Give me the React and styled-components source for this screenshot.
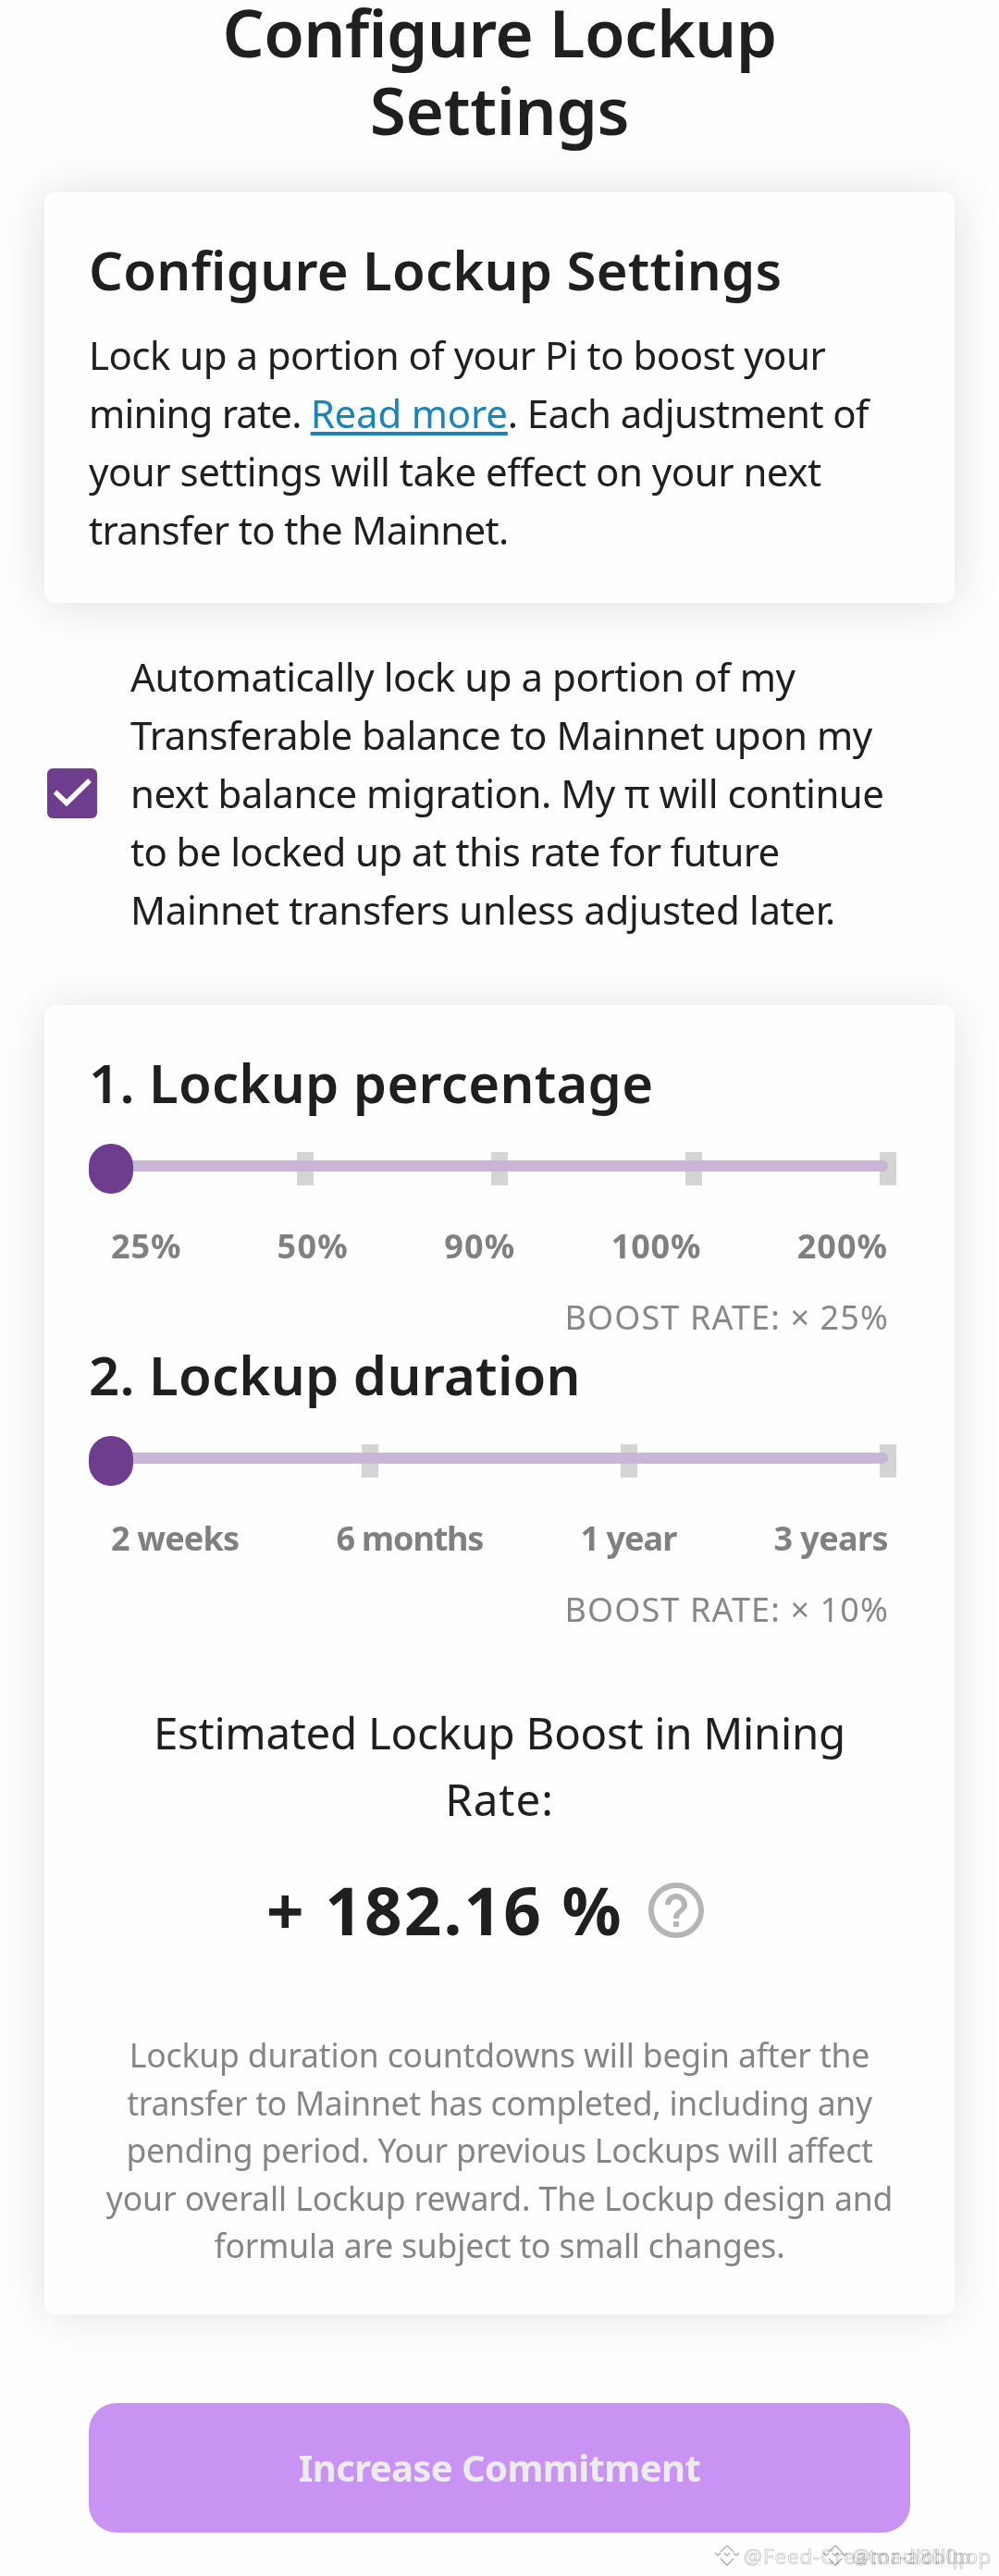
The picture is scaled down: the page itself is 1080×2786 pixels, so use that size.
import React from "react";
import styled, { createGlobalStyle } from "styled-components";

const GlobalStyle = createGlobalStyle`
  *, *::before, *::after { box-sizing: border-box; }
  body {
    margin: 0;
    background: #fefefe;
    color: #1f1f1f;
    font-family: "Noto Sans", "Open Sans", sans-serif;
  }
  h1, h2, h3, p { margin: 0; }
`;

const Page = styled.main`
  display: flex;
  flex-direction: column;
  width: 1080px;
  height: 2786px;
  padding: 0 48px;
  overflow: hidden;
`;

const Line = styled.span`
  display: block;
  white-space: nowrap;
  letter-spacing: ${(p) => p.$track || 0}px;
`;

const PageTitle = styled.h1`
  margin-top: -7px;
  font-size: 71px;
  font-weight: 600;
  line-height: 84px;
  text-align: center;
`;

const Card = styled.section`
  display: flex;
  flex-direction: column;
  margin-top: ${(p) => p.$gap}px;
  padding: 48px;
  border-radius: 12px;
  background: #fefefe;
  box-shadow: 0 2px 52px rgba(0, 0, 0, ${(p) => p.$shade || 0.11});
`;

const Heading = styled.h2`
  font-size: 58px;
  font-weight: 600;
  line-height: 71px;
`;

const Body = styled.p`
  font-size: 42px;
  line-height: 63px;
`;

const Intro = styled(Body)`
  margin-top: 25px;
`;

const Lead = styled.span`
  letter-spacing: -0.85px;
`;

const Link = styled.a`
  color: #1d84b5;
  letter-spacing: -0.2px;
  text-decoration: underline;
  text-decoration-thickness: 4px;
  text-underline-offset: 4px;
`;

const Consent = styled.label`
  display: flex;
  align-items: center;
  gap: 36px;
  margin-top: 48px;
  padding-left: 3px;
`;

const CheckBox = styled.span`
  display: flex;
  flex: none;
  width: 54px;
  height: 54px;
  border-radius: 6px;
  background: #6f3d8e;
`;

const SliderGrid = styled.div`
  display: grid;
  align-items: center;
  height: 54px;
  margin-top: 31px;

  & > * { grid-area: 1 / 1; }
`;

const Ticks = styled.div`
  display: flex;
  justify-content: space-between;
  margin: 0 15px;
`;

const Tick = styled.span`
  width: 18px;
  height: 36px;
  background: #d4d4d4;
`;

const Rail = styled.div`
  height: 12px;
  margin: 0 24px 6px;
  border-radius: 6px;
  background: #c9b5d5;
`;

const Thumb = styled.span`
  width: 48px;
  height: 54px;
  border-radius: 24px;
  background: #6f3d8e;
`;

const Labels = styled.div`
  display: flex;
  justify-content: space-between;
  margin: 30px 24px 0;
  color: #808080;
  font-size: 36px;
  font-weight: 700;
  line-height: 54px;
`;

const BoostRate = styled.p`
  margin: 23px 23px -1px 0;
  color: #888;
  font-size: 36px;
  line-height: 54px;
  text-align: right;
`;

const EstimateLabel = styled.p`
  margin-top: 71px;
  font-size: 47.5px;
  line-height: 72px;
  text-align: center;
`;

const Estimate = styled.div`
  display: flex;
  align-items: center;
  gap: 21px;
  height: 84px;
  margin-top: 42px;
  padding-left: 192px;
  font-size: 71px;
  font-weight: 700;
  line-height: 86px;
`;

const Disclaimer = styled.p`
  margin-top: 89px;
  color: #858585;
  font-size: 35.5px;
  line-height: 51.6px;
  text-align: center;
`;

const SubmitButton = styled.button`
  height: 140px;
  margin: 96px 48px 0;
  padding: 0;
  border: 0;
  border-radius: 30px;
  background: #c893f3;
  color: #ececec;
  font: 700 40px/60px "Noto Sans", "Open Sans", sans-serif;
`;

const Marks = styled.footer`
  display: grid;
  margin: 10px -48px 0 0;

  & > * { grid-area: 1 / 1; }
`;

const Mark = styled.span`
  display: flex;
  align-items: center;
  gap: 4px;
  margin-left: ${(p) => p.$start}px;
  color: #fff;
  font-size: 22px;
  line-height: 30px;
  letter-spacing: ${(p) => p.$track}px;
  white-space: nowrap;
  -webkit-text-stroke: 0.6px #b4b4b4;
  mix-blend-mode: multiply;
`;

function HelpIcon() {
  return (
    <svg width="72" height="72" viewBox="0 0 24 24" fill="#b5b5b5" aria-hidden="true">
      <path d="M11 18h2v-2h-2v2zm1-16C6.48 2 2 6.48 2 12s4.48 10 10 10 10-4.480 10-10S17.520 2 12 2zm0 18c-4.410 0-8-3.590-8-8s3.590-8 8-8 8 3.590 8 8-3.590 8-8 8zm0-14c-2.210 0-4 1.790-4 4h2c0-1.100.900-2 2-2s2 .9 2 2c0 2-3 1.750-3 5h2c0-2.250 3-2.500 3-5 0-2.210-1.790-4-4-4z" />
    </svg>
  );
}

function DiamondIcon() {
  return (
    <svg width="28" height="24" viewBox="0 0 28 24" fill="none" stroke="#ababab" strokeWidth="1.2" aria-hidden="true">
      <path d="M7 8 14 1l7 7M7 15l7 7.500 7-7.500M1 9l3 3 3-3M21 9l3 3 3-3M11 9l3 3 3-3" />
    </svg>
  );
}

function Slider({ labels, boost }) {
  return (
    <>
      <SliderGrid>
        <Ticks>
          {labels.map(([text]) => (
            <Tick key={text} />
          ))}
        </Ticks>
        <Rail />
        <Thumb />
      </SliderGrid>
      <Labels>
        {labels.map(([text, track]) => (
          <Line key={text} $track={track}>{text}</Line>
        ))}
      </Labels>
      <BoostRate>
        <Line $track={1.1}>BOOST RATE: × {boost}</Line>
      </BoostRate>
    </>
  );
}

const percentages = [["25%", 0.9], ["50%", 1.2], ["90%", 1.2], ["100%", 0.9], ["200%", 1]];
const durations = [["2 weeks", -0.86], ["6 months", -1.15], ["1 year", -1], ["3 years", -0.62]];

export default function App() {
  return (
    <>
      <GlobalStyle />
      <Page>
        <PageTitle>
          <Line $track={-0.67}>Configure Lockup</Line>
          <Line $track={-0.31}>Settings</Line>
        </PageTitle>

        <Card $gap={47} $shade={0.13}>
          <Heading><Line $track={0.2}>Configure Lockup Settings</Line></Heading>
          <Intro>
            <Line $track={-0.53}>Lock up a portion of your Pi to boost your</Line>
            <Line $track={-0.62}>
              <Lead>mining rate. </Lead><Link>Read more</Link>. Each adjustment of
            </Line>
            <Line $track={-0.5}>your settings will take effect on your next</Line>
            <Line $track={-0.66}>transfer to the Mainnet.</Line>
          </Intro>
        </Card>

        <Consent>
          <CheckBox>
            <svg width="54" height="54" viewBox="0 0 54 54" fill="none" stroke="#fff" strokeWidth="5.5" aria-hidden="true">
              <path d="M8.500 25.500 21 37.500 46 13" />
            </svg>
          </CheckBox>
          <Body>
            <Line $track={-0.45}>Automatically lock up a portion of my</Line>
            <Line $track={-0.52}>Transferable balance to Mainnet upon my</Line>
            <Line $track={-0.5}>next balance migration. My π will continue</Line>
            <Line $track={-0.63}>to be locked up at this rate for future</Line>
            <Line $track={-0.37}>Mainnet transfers unless adjusted later.</Line>
          </Body>
        </Consent>

        <Card $gap={72}>
          <Heading><Line $track={0.25}>1. Lockup percentage</Line></Heading>
          <Slider labels={percentages} boost="25%" />
          <Heading><Line $track={0.25}>2. Lockup duration</Line></Heading>
          <Slider labels={durations} boost="10%" />

          <EstimateLabel>
            <Line $track={-0.31}>Estimated Lockup Boost in Mining</Line>
            <Line $track={0.96}>Rate:</Line>
          </EstimateLabel>
          <Estimate>
            <Line $track={2.1}>+ 182.16 %</Line>
            <HelpIcon />
          </Estimate>

          <Disclaimer>
            <Line $track={-0.15}>Lockup duration countdowns will begin after the</Line>
            <Line $track={-0.3}>transfer to Mainnet has completed, including any</Line>
            <Line $track={-0.22}>pending period. Your previous Lockups will affect</Line>
            <Line $track={-0.09}>your overall Lockup reward. The Lockup design and</Line>
            <Line $track={-0.2}>formula are subject to small changes.</Line>
          </Disclaimer>
        </Card>

        <SubmitButton type="button">
          <Line $track={-0.6}>Increase Commitment</Line>
        </SubmitButton>

        <Marks>
          <Mark $start={724} $track={1.1}>
            <DiamondIcon />
            @Feed-Creator-a8b0p
          </Mark>
          <Mark $start={841} $track={0.7}>
            <DiamondIcon />
            @madlollipop
          </Mark>
        </Marks>
      </Page>
    </>
  );
}
